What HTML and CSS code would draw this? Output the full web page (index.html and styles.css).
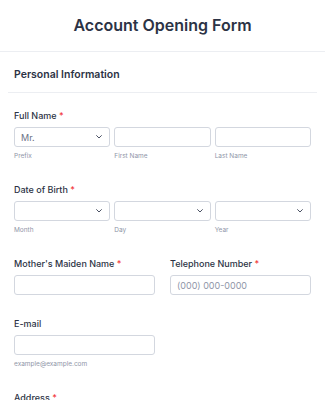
FILE: index.html
```html
<!DOCTYPE html>
<html lang="en">
<head>
<meta charset="utf-8">
<title>Account Opening Form</title>
<link rel="stylesheet" href="styles.css">
</head>
<body>
<header class="form-header">
  <h1 class="form-title">Account Opening Form</h1>
</header>
<section class="section">
  <h2 class="section-title">Personal Information</h2>
</section>
<main class="fields">
  <div class="field">
    <div class="label">Full Name <span class="req">*</span></div>
    <div class="row row-3">
      <div class="col">
        <div class="input select"><span class="value">Mr.</span><svg class="chev" viewBox="0 0 6 4" width="6" height="4"><path d="M0.6 0.6 L3 3 L5.4 0.6" fill="none" stroke="#4b5264" stroke-width="1" stroke-linecap="round" stroke-linejoin="round"/></svg></div>
        <div class="sub">Prefix</div>
      </div>
      <div class="col">
        <div class="input"></div>
        <div class="sub">First Name</div>
      </div>
      <div class="col">
        <div class="input"></div>
        <div class="sub">Last Name</div>
      </div>
    </div>
  </div>

  <div class="field">
    <div class="label">Date of Birth <span class="req">*</span></div>
    <div class="row row-3">
      <div class="col">
        <div class="input select"><span class="value"></span><svg class="chev" viewBox="0 0 6 4" width="6" height="4"><path d="M0.6 0.6 L3 3 L5.4 0.6" fill="none" stroke="#4b5264" stroke-width="1" stroke-linecap="round" stroke-linejoin="round"/></svg></div>
        <div class="sub">Month</div>
      </div>
      <div class="col">
        <div class="input select"><span class="value"></span><svg class="chev" viewBox="0 0 6 4" width="6" height="4"><path d="M0.6 0.6 L3 3 L5.4 0.6" fill="none" stroke="#4b5264" stroke-width="1" stroke-linecap="round" stroke-linejoin="round"/></svg></div>
        <div class="sub">Day</div>
      </div>
      <div class="col">
        <div class="input select"><span class="value"></span><svg class="chev" viewBox="0 0 6 4" width="6" height="4"><path d="M0.6 0.6 L3 3 L5.4 0.6" fill="none" stroke="#4b5264" stroke-width="1" stroke-linecap="round" stroke-linejoin="round"/></svg></div>
        <div class="sub">Year</div>
      </div>
    </div>
  </div>

  <div class="row row-2">
    <div class="field">
      <div class="label">Mother's Maiden Name <span class="req">*</span></div>
      <div class="input"></div>
    </div>
    <div class="field">
      <div class="label">Telephone Number <span class="req">*</span></div>
      <div class="input"><span class="placeholder">(000) 000-0000</span></div>
    </div>
  </div>

  <div class="row row-2">
    <div class="field">
      <div class="label">E-mail</div>
      <div class="input"></div>
      <div class="sub">example@example.com</div>
    </div>
  </div>

  <div class="field">
    <div class="label">Address <span class="req">*</span></div>
  </div>
</main>
</body>
</html>
```

FILE: styles.css
```css
* {
  box-sizing: border-box;
}

html, body {
  margin: 0;
  padding: 0;
  background: #ffffff;
}

body {
  font-family: Inter, "Noto Sans", "Liberation Sans", sans-serif;
  color: #2c3345;
  width: 325px;
  overflow: hidden;
}

.form-header {
  height: 52px;
  border-bottom: 1px solid #eceef2;
  display: flex;
  align-items: center;
  justify-content: center;
  padding-bottom: 1px;
}

.form-title {
  margin: 0;
  font-size: 16px;
  font-weight: 600;
  line-height: 22px;
  color: #2c3345;
}

.section {
  margin: 0 8px;
  padding: 16px 6px 10px;
  border-bottom: 1px solid #eceef2;
}

.section-title {
  margin: 0;
  font-size: 10.5px;
  font-weight: 600;
  line-height: 14px;
  color: #2c3345;
}

.fields {
  padding: 16px 14px 0 14px;
  display: flex;
  flex-direction: column;
  gap: 22px;
}

.label {
  font-size: 9px;
  font-weight: 500;
  line-height: 13px;
  margin-bottom: 5px;
  color: #2c3345;
  white-space: nowrap;
}

.req {
  color: #f23a3c;
}

.row {
  display: grid;
}

.row-3 {
  grid-template-columns: 1fr 1fr 1fr;
  column-gap: 4px;
}

.row-2 {
  grid-template-columns: 1fr 1fr;
  column-gap: 15px;
}

.input {
  height: 20px;
  border: 1px solid #d3d7df;
  border-radius: 3px;
  background: #ffffff;
  display: flex;
  align-items: center;
  padding: 0 6px;
  font-size: 9px;
}

.select {
  justify-content: space-between;
  padding-right: 7px;
}

.value {
  color: #6b7285;
  font-size: 9px;
  font-weight: 400;
}

.chev {
  display: block;
}

.placeholder {
  color: #8f96a8;
  font-size: 9px;
}

.sub {
  margin-top: 4px;
  font-size: 6.5px;
  line-height: 10px;
  color: #8f96a8;
  white-space: nowrap;
}
```
